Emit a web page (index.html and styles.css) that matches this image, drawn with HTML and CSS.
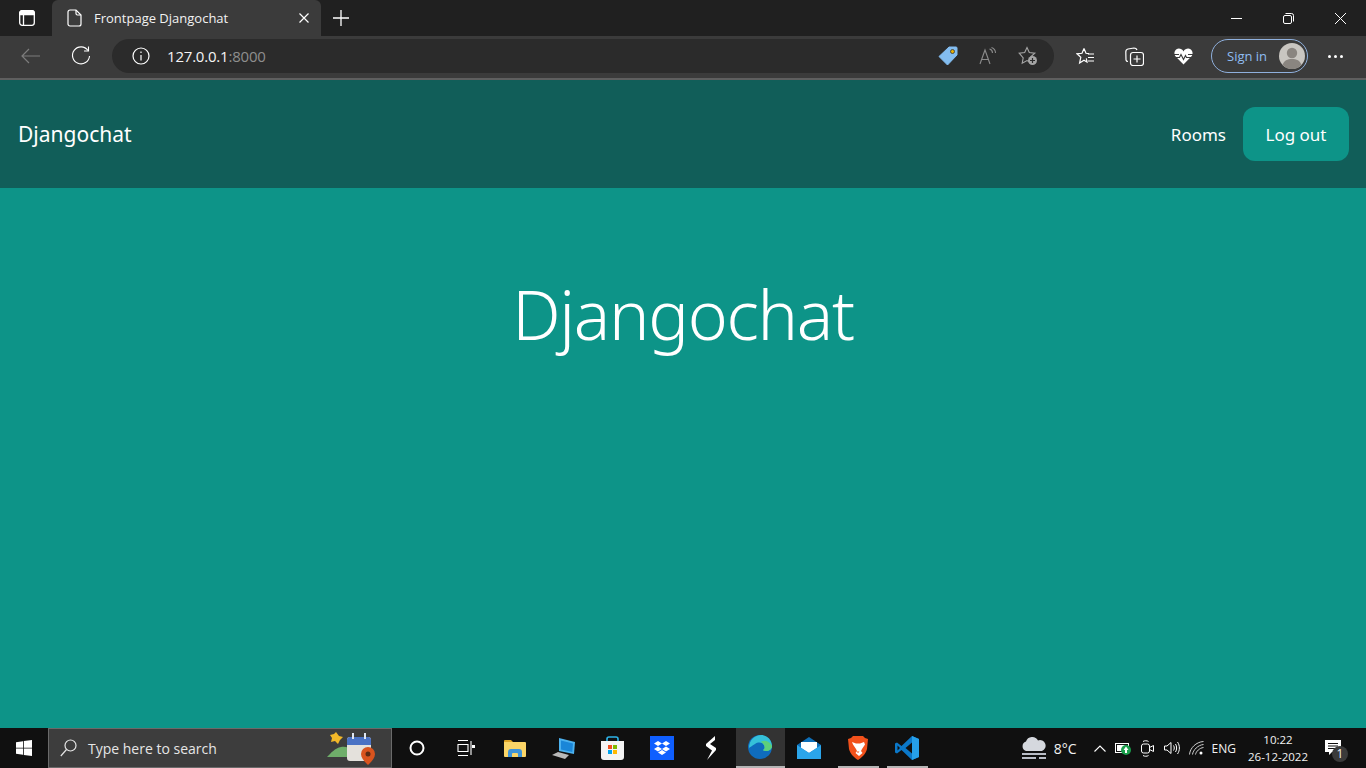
FILE: index.html
```html
<!DOCTYPE html>
<html>
<head>
    <meta charset="utf-8">
    <title>Frontpage Djangochat</title>
    <link rel="stylesheet" href="styles.css">
</head>
<body>
    <!-- browser chrome -->
    <div class="tabstrip">
        <div class="tab_toggle">
            <svg width="16" height="16" viewBox="0 0 16 16" fill="none" stroke="#fff" stroke-width="1.3"><rect x="0.7" y="0.7" width="14.6" height="14.6" rx="2.5"/><path d="M0.7 4.5h14.6V3a2.3 2.3 0 0 0-2.3-2.3H3A2.3 2.3 0 0 0 .7 3z" fill="#fff"/><path d="M4.5 4.5v10.8"/></svg>
        </div>
        <div class="tab">
            <svg width="15" height="18" viewBox="0 0 15 18" fill="none" stroke="#fff" stroke-width="1.2"><path d="M1 3a2 2 0 0 1 2-2h6l5 5v9a2 2 0 0 1-2 2H3a2 2 0 0 1-2-2z"/><path d="M9 1v3.5A1.5 1.5 0 0 0 10.500 6H14"/></svg>
            <span class="tab_title">Frontpage Djangochat</span>
            <svg class="tab_close" width="10" height="10" viewBox="0 0 10 10" stroke="#fff" stroke-width="1.2"><path d="M0.500 0.500l9 9M9.500 0.500l-9 9"/></svg>
        </div>
        <svg class="new_tab" width="16" height="16" viewBox="0 0 16 16" stroke="#fff" stroke-width="1.300"><path d="M8 0v16M0 8h16"/></svg>
        <div class="win_buttons">
            <svg width="11" height="11" viewBox="0 0 11 11" stroke="#fff"><path d="M0 5.500h11"/></svg>
            <svg width="11" height="11" viewBox="0 0 11 11" fill="none" stroke="#fff"><rect x="0.500" y="2.500" width="8" height="8" rx="1.500"/><path d="M2.500 .5h6a2 2 0 0 1 2 2v6"/></svg>
            <svg width="11" height="11" viewBox="0 0 11 11" stroke="#fff"><path d="M0 0l11 11M11 0L0 11"/></svg>
        </div>
    </div>

    <div class="toolbar">
        <svg class="back" width="20" height="16" viewBox="0 0 20 16" fill="none" stroke="#7d7d7d" stroke-width="1.200"><path d="M19 8H1M8 1L1 8l7 7"/></svg>
        <svg class="reload" width="20" height="20" viewBox="0 0 20 20" fill="none" stroke="#fff" stroke-width="1.100"><path d="M17 4.500A8.500 8.500 0 1 0 18.500 10"/><path d="M17.500 .5v4.500h-4.500"/></svg>
        <div class="address">
            <svg width="18" height="18" viewBox="0 0 18 18" fill="none" stroke="#fff" stroke-width="1.200"><circle cx="9" cy="9" r="8"/><path d="M9 8v5.500M9 4.500v1.500"/></svg>
            <span class="url">127.0.0.1<span class="url_port">:8000</span></span>
            <div class="address_icons">
                <svg width="20" height="20" viewBox="0 0 20 20"><path d="M11 1h7a1 1 0 0 1 1 1v7L9.500 19 1 10.500z" fill="#83bdf0" stroke="#83bdf0" stroke-linejoin="round"/><circle cx="14.500" cy="5.500" r="2" fill="#e8b000" stroke="#333" stroke-width=".8"/></svg>
                <svg width="18" height="18" viewBox="0 0 18 18" fill="none" stroke="#8b8b8b" stroke-width="1.100"><path d="M1 17L6 3l5 14M2.800 12.500h6.400M10.500 2c2 .5 3 2 3 4M12.500 .5c2.500 1 4 3 4 5.500"/></svg>
                <svg width="20" height="20" viewBox="0 0 20 20" fill="none" stroke="#a5a5a5" stroke-width="1.100"><path d="M9 1.500l2.300 5 5.500.6-4 3.700.6 3.200-1.500 2-2.900-1.500-4.800 2.700 1-5.400L1.200 7.100l5.500-.6z"/><circle cx="14.500" cy="14.500" r="4.500" fill="#a5a5a5" stroke="none"/><path d="M14.500 12v5M12 14.500h5" stroke="#2b2b2b" stroke-width="1.200"/></svg>
            </div>
        </div>
        <div class="tool_icons">
            <svg width="19" height="18" viewBox="0 0 19 18" fill="none" stroke="#fff" stroke-width="1.200"><path d="M8 1.500l2 4.800 3 .3M8 1.500L6 6.300l-5 .5 3.800 3.400L3.600 16 8 13.300l3 1.700-.7-3.600"/><path d="M12 7h6M12 10.500h6M12 14h6"/></svg>
            <svg width="19" height="19" viewBox="0 0 19 19" fill="none" stroke="#fff" stroke-width="1.200"><path d="M3 14.500A2 2 0 0 1 1 13l-.2-8A3 3 0 0 1 3 2l6-1c1.500 0 2.500.5 3 2"/><rect x="5.500" y="5.500" width="13" height="13" rx="2.500"/><path d="M12 8.500v7M8.500 12h7"/></svg>
            <svg width="19" height="17" viewBox="0 0 19 17"><path d="M9.500 3.500C8 .5 4.500 0 2.500 1.200.5 2.500-.3 5.500 1.200 8L9.500 16.500 17.800 8c1.500-2.500.7-5.500-1.300-6.800C14.500 0 11 .5 9.500 3.500z" fill="#fff"/><path d="M0 6.500h5M14 6.500h5M0 9.500h5.500l1.500-3 2.500 5 2-4 1 2H19" fill="none" stroke="#3b3b3b" stroke-width="1.100"/></svg>
            <div class="signin">
                <span>Sign in</span>
                <div class="avatar">
                    <svg width="26" height="26" viewBox="0 0 26 26"><circle cx="13" cy="13" r="13" fill="#c9c6c1"/><circle cx="13" cy="10" r="5.200" fill="#8a8580"/><path d="M3.500 22c1.500-4.500 5-6 9.500-6s8 1.500 9.500 6a13 13 0 0 1-19 0z" fill="#8a8580"/></svg>
                </div>
            </div>
            <div class="dots"><i></i><i></i><i></i></div>
        </div>
    </div>

    <!-- the actual page -->
    <nav class="navbar">
        <a class="brand">Djangochat</a>
        <div class="nav_links">
            <a class="nav_link">Rooms</a>
            <a class="btn_logout">Log out</a>
        </div>
    </nav>
    <main class="hero">
        <h1>Djangochat</h1>
    </main>

    <!-- windows taskbar -->
    <div class="taskbar">
        <div class="start">
            <svg width="16" height="16" viewBox="0 0 16 16" fill="#fff"><path d="M0 2.300l7-1v6.400H0zM7.800 1.100L16 0v7.700H7.800zM0 8.400h7v6.400l-7-1zM7.800 8.400H16V16l-8.200-1.100z"/></svg>
        </div>
        <div class="search">
            <svg width="17" height="18" viewBox="0 0 17 18" fill="none" stroke="#e6e6e6" stroke-width="1.200"><circle cx="10.500" cy="6.500" r="5.500"/><path d="M6.500 10.500L.8 17"/></svg>
            <span class="search_text">Type here to search</span>
            <svg class="search_art" width="50" height="34" viewBox="0 0 50 34"><path d="M0 26c4-4 8-9 14-10 5-1 8 1 11 3v7z" fill="#6fae6a"/><path d="M9 1l3 4 4 1-3 3-2 4-3-3-4 1 1-4-2-3 4-1z" fill="#f2b829"/><rect x="20" y="6" width="24" height="24" rx="3" fill="#e4e1dc"/><path d="M20 14V9a3 3 0 0 1 3-3h18a3 3 0 0 1 3 3v5z" fill="#4a72c4"/><path d="M26 2v6M38 2v6" stroke="#dfe6f2" stroke-width="2"/><path d="M41 34c-4-4-7-7-7-11a7 7 0 0 1 14 0c0 4-3 7-7 11z" fill="#d9541e"/><circle cx="41" cy="23" r="2.500" fill="#5b2b14"/></svg>
        </div>
        <div class="task_icons">
            <div class="task_icon">
                <svg width="16" height="16" viewBox="0 0 16 16" fill="none" stroke="#fff" stroke-width="2"><circle cx="8" cy="8" r="6.500"/></svg>
            </div>
            <div class="task_icon">
                <svg width="18" height="16" viewBox="0 0 18 16" fill="none" stroke="#fff" stroke-width="1.100"><path d="M1 .5h10M1 15.500h10M1 4.500h10v7H1zM14 1v14"/><path d="M15 5h3v3h-3z" fill="#fff" stroke="none"/></svg>
            </div>
            <div class="task_icon">
                <svg width="22" height="18" viewBox="0 0 22 18"><path d="M0 2a1 1 0 0 1 1-1h6l2 2H0z" fill="#e0a526"/><path d="M0 3h21a1 1 0 0 1 1 1v13a1 1 0 0 1-1 1H1a1 1 0 0 1-1-1z" fill="#fbd567"/><path d="M4 18v-5a3 3 0 0 1 3-3h8a3 3 0 0 1 3 3v5h-4v-3a1 1 0 0 0-1-1H9a1 1 0 0 0-1 1v3z" fill="#3f94d8"/></svg>
            </div>
            <div class="task_icon">
                <svg width="24" height="21" viewBox="0 0 24 21"><path d="M7 0l16 4-1 12-15-3z" fill="#4cb1ee"/><path d="M9 2.500l12 3-.7 8.500L9 11.500z" fill="#1a86d8"/><path d="M0 17l6-3 11 3-4 4z" fill="#b9b9b9"/></svg>
            </div>
            <div class="task_icon">
                <svg width="23" height="24" viewBox="0 0 23 24"><path d="M6 6V3a2 2 0 0 1 2-2h7a2 2 0 0 1 2 2v3" fill="none" stroke="#2db3e8" stroke-width="1.600"/><path d="M0 5h23v16a3 3 0 0 1-3 3H3a3 3 0 0 1-3-3z" fill="#f4f4f4"/><path d="M7 9h4v4H7z" fill="#f25022"/><path d="M12 9h4v4h-4z" fill="#7fba00"/><path d="M7 14h4v4H7z" fill="#00a4ef"/><path d="M12 14h4v4h-4z" fill="#ffb900"/></svg>
            </div>
            <div class="task_icon">
                <svg width="24" height="24" viewBox="0 0 24 24"><path d="M0 0h24v24H0z" fill="#0f5fff"/><path d="M8 5l4 2.500L8 10 4 7.500zM16 5l4 2.500-4 2.500-4-2.500zM8 10.500l4 2.500-4 2.500L4 13zM16 10.500l4 2.500-4 2.500-4-2.500zM8 16.500l4-2.500 4 2.500-4 2.500z" fill="#fff"/></svg>
            </div>
            <div class="task_icon">
                <svg width="12" height="24" viewBox="0 0 12 24"><path d="M10 0L1 8v2l6 4.500L2 24l9-10v-2L5 8l5-4z" fill="#fff"/></svg>
            </div>
            <div class="task_icon task_active">
                <svg width="24" height="24" viewBox="0 0 24 24"><circle cx="12" cy="12" r="12" fill="#0f6cbd"/><path d="M1 13C1 5 7 0 13 0c6 0 11 5 11 11 0 3-3 5-6 5-2 0-3-1-3-1 2-1 2-3 1-5-2-3-6-3-9-1-3 2-5 3-6 4z" fill="#35c1d9"/><path d="M24 11c0 3-3 5-6 5-2 0-3-1-3-1 2-1 2-3 1-5-1-2-3-3-3-3 2-2 8-2 11 4z" fill="#5ed07a"/></svg>
            </div>
            <div class="task_icon">
                <svg width="24" height="22" viewBox="0 0 24 22"><path d="M12 0l12 8v14H0V8z" fill="#0d6fb8"/><path d="M4 5h16v6l-8 5-8-5z" fill="#fff"/><path d="M0 8l12 8 12-8v14H0z" fill="#2ba5ea"/></svg>
            </div>
            <div class="task_icon task_open">
                <svg width="20" height="24" viewBox="0 0 20 24"><path d="M5 0h10l2 2 3 1-1 10c-1 5-6 9-9 11-3-2-8-6-9-11L0 3l3-1z" fill="#f1511b"/><path d="M4 6l4 1.500h4l4-1.500 1 2.500-3 4.500-1 2 1.500 2-3.500 3-3.500-3 1.500-2-1-2-3-4.500z" fill="#fff"/><path d="M8.500 15.500h3L10 17z" fill="#f1511b"/></svg>
            </div>
            <div class="task_icon task_open">
                <svg width="24" height="24" viewBox="0 0 24 24"><path d="M17 0l7 3v18l-7 3L6.500 14 2 17.500 0 16.500v-9L2 6.500 6.500 10z" fill="#0b78c9"/><path d="M17 6.500L10.500 12l6.500 5.500z" fill="#101010"/><path d="M17 0l7 3v18l-7 3z" fill="#26a0ea"/><path d="M2.500 9.500L5 12l-2.500 2.500z" fill="#101010"/></svg>
            </div>
        </div>
        <div class="tray">
            <div class="weather">
                <svg width="26" height="24" viewBox="0 0 26 24"><path d="M5 15a5 5 0 0 1 0-9.500 6.500 6.500 0 0 1 12-1A5.500 5.500 0 0 1 21 15z" fill="#d5d8de"/><path d="M1 18h24M1 22h14M18 22h7" stroke="#b9bdc6" stroke-width="2"/></svg>
                <span>8°C</span>
            </div>
            <svg class="chevron" width="12" height="7" viewBox="0 0 12 7" fill="none" stroke="#fff" stroke-width="1.100"><path d="M.5 6.500L6 1l5.500 5.500"/></svg>
            <svg class="tray_icon" width="16" height="14" viewBox="0 0 16 14"><rect x=".5" y="2.500" width="13" height="9" fill="none" stroke="#fff"/><path d="M2 4h8v6H2z" fill="#fff"/><circle cx="11" cy="9" r="5" fill="#1a9e4b"/><path d="M11 5.500l2.500 3.500H12v3h-2V9H8.500z" fill="#fff"/></svg>
            <svg class="tray_icon" width="15" height="17" viewBox="0 0 15 17" fill="none" stroke="#fff"><rect x="1.500" y="4" width="8" height="9" rx="2"/><path d="M9.500 7.500l4-2v6l-4-2M3 1.500c1.500-1 4-1 5.500 0M3 15.500c1.500 1 4 1 5.500 0"/></svg>
            <svg class="tray_icon" width="16" height="14" viewBox="0 0 16 14" fill="none" stroke="#fff"><path d="M.5 5h2.500l4-3.500v11L3 9H.5zM9.500 4.500c1 1.500 1 3.500 0 5M11.500 3c1.500 2.500 1.500 5.500 0 8M13.500 1c2.500 3.500 2.500 8.500 0 12"/></svg>
            <svg class="tray_icon" width="15" height="14" viewBox="0 0 15 14" fill="none" stroke="#cfcfcf"><path d="M.5 13.500C1 7 7 1 14.500 .5M3.500 13.500C4 9 9 4 14.500 3.500M6.500 13.500c.5-3 4-6.500 8-7"/><circle cx="12" cy="12" r="1.500" fill="#fff" stroke="none"/></svg>
            <span class="lang">ENG</span>
            <div class="clock">
                <span>10:22</span>
                <span>26-12-2022</span>
            </div>
            <div class="notify">
                <svg width="16" height="16" viewBox="0 0 16 16"><path d="M0 0h16v12H7l-3 3v-3H0z" fill="#fff"/><path d="M3 3.500h10M3 6h10M3 8.500h7" stroke="#101010"/></svg>
                <span class="notify_badge">1</span>
            </div>
        </div>
    </div>
</body>
</html>
```

FILE: styles.css
```css
* {
    box-sizing: border-box;
}

html, body {
    height: 100%;
}

body {
    margin: 0;
    display: flex;
    flex-direction: column;
    height: 768px;
    overflow: hidden;
    font-family: "Open Sans", "Noto Sans", sans-serif;
    background-color: #0d9488;
    color: white;
}

svg {
    display: block;
    flex-shrink: 0;
}

/* tabs row */
.tabstrip {
    height: 36px;
    display: flex;
    align-items: center;
    background-color: #202020;
}
.tab_toggle {
    width: 52px;
    padding-left: 19px;
}
.tab {
    width: 269px;
    height: 36px;
    margin-top: 0;
    padding: 0 12px 0 15px;
    display: flex;
    align-items: center;
    background-color: #3b3b3b;
    border-radius: 6px 6px 0 0;
}
.tab_title {
    flex: 1;
    margin-left: 12px;
    font-size: 13px;
    color: #f2f2f2;
    white-space: nowrap;
}
.new_tab {
    margin-left: 12px;
}
.win_buttons {
    margin-left: auto;
    display: flex;
    align-items: center;
    gap: 41px;
    padding-right: 20px;
}

/* address bar row */
.toolbar {
    height: 44px;
    padding-bottom: 2px;
    display: flex;
    align-items: center;
    background-color: #3b3b3b;
    border-bottom: 2px solid #5f5f5f;
}
.back {
    margin-left: 21px;
}
.reload {
    margin-left: 30px;
}
.address {
    width: 942px;
    height: 34px;
    margin-left: 21px;
    padding: 0 16px 0 20px;
    display: flex;
    align-items: center;
    background-color: #2b2b2b;
    border-radius: 17px;
}
.url {
    margin-left: 17px;
    font-size: 15px;
    letter-spacing: -0.2px;
    color: #f4f4f4;
}
.url_port {
    color: #8e8e8e;
}
.address_icons {
    margin-left: auto;
    display: flex;
    align-items: center;
    gap: 21px;
}
.tool_icons {
    flex: 1;
    padding-left: 22px;
    display: flex;
    align-items: center;
    gap: 30px;
}
.signin {
    width: 97px;
    height: 34px;
    margin-left: -12px;
    padding: 0 2px 0 15px;
    display: flex;
    align-items: center;
    justify-content: space-between;
    border: 1px solid #8fb0dd;
    border-radius: 17px;
    font-size: 13px;
    color: #8fbdf0;
}
.dots {
    margin-left: -10px;
    display: flex;
    gap: 3px;
}
.dots i {
    width: 3px;
    height: 3px;
    border-radius: 50%;
    background-color: white;
}

/* page */
.navbar {
    height: 108px;
    padding: 0 17px 0 18px;
    display: flex;
    align-items: center;
    justify-content: space-between;
    background-color: #115e59;
    font-family: "Noto Sans", "Open Sans", sans-serif;
}
.brand {
    font-size: 21px;
}
.nav_links {
    display: flex;
    align-items: center;
    font-size: 17px;
}
.nav_link {
    margin-right: 17px;
}
.btn_logout {
    width: 106px;
    height: 54px;
    display: flex;
    align-items: center;
    justify-content: center;
    background-color: #0d9488;
    border-radius: 12px;
}
.hero {
    flex: 1;
    padding-top: 78px;
    text-align: center;
}
.hero h1 {
    margin: 0;
    font-family: "Noto Sans", "Open Sans", sans-serif;
    font-size: 68px;
    letter-spacing: -1.300px;
    line-height: 96px;
    font-weight: 300;
}

/* taskbar */
.taskbar {
    height: 40px;
    display: flex;
    align-items: center;
    background-color: #101010;
}
.start {
    width: 48px;
    padding-left: 16px;
}
.search {
    width: 344px;
    height: 40px;
    padding: 0 16px 0 11px;
    display: flex;
    align-items: center;
    background-color: #3d3d3d;
    border: 1px solid #6a6a6a;
}
.search_text {
    flex: 1;
    margin-left: 11px;
    font-size: 14px;
    color: #e6e6e6;
}
.search_art {
    margin-right: -2px;
}
.task_icons {
    display: flex;
    height: 40px;
}
.task_icon {
    width: 49.100px;
    height: 40px;
    display: flex;
    align-items: center;
    justify-content: center;
}
.task_active {
    background-color: #333;
    border-bottom: 2px solid #b5b5b5;
}
.task_open {
    position: relative;
}
.task_open::after {
    content: "";
    position: absolute;
    left: 4px;
    right: 4px;
    bottom: 0;
    height: 2px;
    background-color: #b5b5b5;
}
.tray {
    flex: 1;
    height: 40px;
    display: flex;
    align-items: center;
    font-size: 12px;
    color: #f2f2f2;
}
.weather {
    margin-left: auto;
    display: flex;
    align-items: center;
    gap: 7px;
    font-size: 14px;
}
.chevron {
    margin-left: 17px;
}
.tray_icon {
    margin-left: 9px;
}
.lang {
    margin-left: 8px;
}
.clock {
    width: 80px;
    margin-left: 2px;
    display: flex;
    flex-direction: column;
    align-items: center;
    font-size: 11.500px;
    line-height: 17px;
}
.notify {
    position: relative;
    width: 48px;
    padding-left: 7px;
}
.notify_badge {
    position: absolute;
    left: 14px;
    top: 6px;
    width: 16px;
    height: 16px;
    border-radius: 50%;
    background-color: #3a3a3a;
    font-size: 12px;
    line-height: 16px;
    text-align: center;
}
```
